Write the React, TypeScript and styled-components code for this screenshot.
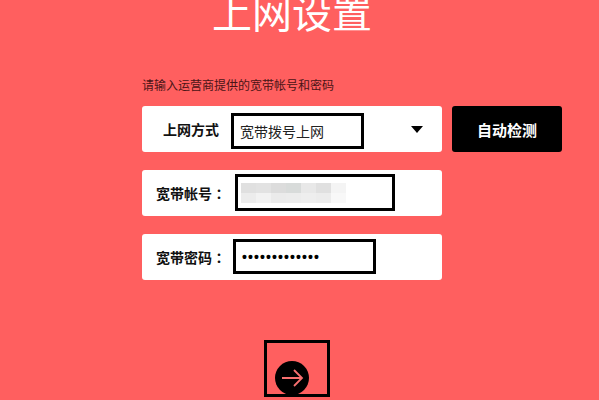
import { createGlobalStyle } from "styled-components";
import styled from "styled-components";

const GlobalStyle = createGlobalStyle`
  html, body {
    margin: 0;
    padding: 0;
    height: 100%;
    overflow: hidden;
    background: #ff5f5f;
    font-family: "Liberation Sans", "Noto Sans CJK SC", sans-serif;
  }
`;

const Page = styled.div`
  width: 599px;
  height: 400px;
  background: #ff5f5f;
  display: flex;
  flex-direction: column;
  overflow: hidden;
`;

const Title = styled.h1`
  margin: -11px 0 0 -15px;
  font-size: 40px;
  line-height: 50px;
  font-weight: 400;
  color: #fff;
  text-align: center;
`;

const Form = styled.div`
  display: flex;
  flex-direction: column;
  padding-left: 142px;
`;

const Hint = styled.p`
  margin: 40px 0 13px;
  font-size: 12px;
  line-height: 14px;
  color: #4a1416;
`;

const TopRow = styled.div`
  display: flex;
  gap: 10px;
  margin-bottom: 18px;
`;

const Card = styled.div<{ $gap?: number }>`
  width: 300px;
  height: 46px;
  box-sizing: border-box;
  background: #fff;
  border-radius: 3px;
  display: flex;
  align-items: center;
  flex-shrink: 0;
  margin-bottom: ${(p) => p.$gap ?? 0}px;
`;

const Label = styled.span<{ $left: number; $width: number }>`
  margin-left: ${(p) => p.$left}px;
  width: ${(p) => p.$width}px;
  flex-shrink: 0;
  font-size: 14px;
  font-weight: 700;
  color: #111;
  white-space: nowrap;
`;

const Colon = styled.span`
  font-family: "Noto Sans CJK TC", sans-serif;
`;

const Field = styled.div<{ $width: number; $height: number; $top: number }>`
  box-sizing: border-box;
  width: ${(p) => p.$width}px;
  height: ${(p) => p.$height}px;
  margin-top: ${(p) => p.$top}px;
  border: 3px solid #000;
  padding-left: 6px;
  display: flex;
  align-items: center;
  font-size: 14px;
  color: #222;
`;

const Caret = styled.span`
  margin-left: 47px;
  width: 0;
  height: 0;
  border-left: 6px solid transparent;
  border-right: 6px solid transparent;
  border-top: 7px solid #000;
`;

const DetectButton = styled.button`
  width: 110px;
  height: 46px;
  padding: 0;
  border: 0;
  border-radius: 3px;
  background: #000;
  color: #fff;
  font-family: inherit;
  font-size: 15px;
  font-weight: 700;
`;

const Mosaic = styled.div`
  display: grid;
  grid-template-columns: repeat(7, 15px);
  grid-template-rows: repeat(2, 10px);
  margin-left: -3px;
`;

const Tile = styled.div<{ $color: string }>`
  background: ${(p) => p.$color};
`;

const Dots = styled.span`
  font-size: 14px;
  font-weight: 700;
  letter-spacing: 1.1px;
  color: #000;
`;

const NextWrap = styled.div`
  box-sizing: border-box;
  width: 66px;
  height: 57px;
  margin: 60px 0 0 264px;
  border: 3px solid #000;
  padding: 18px 0 0 8px;
`;

const NextButton = styled.button`
  display: flex;
  align-items: center;
  justify-content: center;
  width: 34px;
  height: 34px;
  padding: 0;
  border: 0;
  border-radius: 50%;
  background: #000;
`;

const tiles = [
  "#e0e0e0", "#e2e2e2", "#dcdcdc", "#d8dbda", "#e8e8e8", "#e0e0e0", "#f4f4f4",
  "#ececec", "#f2f2f2", "#ebebeb", "#ececec", "#eeeeee", "#ececec", "#f8f8f8",
];

export default function App() {
  return (
    <Page>
      <GlobalStyle />
      <Title>上网设置</Title>
      <Form>
        <Hint>请输入运营商提供的宽带帐号和密码</Hint>
        <TopRow>
          <Card>
            <Label $left={21} $width={68}>上网方式</Label>
            <Field $width={133} $height={36} $top={3}>宽带拨号上网</Field>
            <Caret />
          </Card>
          <DetectButton>自动检测</DetectButton>
        </TopRow>
        <Card $gap={18}>
          <Label $left={14} $width={79}>宽带帐号<Colon>：</Colon></Label>
          <Field $width={160} $height={37} $top={-1}>
            <Mosaic>
              {tiles.map((color, i) => (
                <Tile key={i} $color={color} />
              ))}
            </Mosaic>
          </Field>
        </Card>
        <Card>
          <Label $left={14} $width={77}>宽带密码<Colon>：</Colon></Label>
          <Field $width={143} $height={35} $top={-1}>
            <Dots>•••••••••••••</Dots>
          </Field>
        </Card>
      </Form>
      <NextWrap>
        <NextButton aria-label="下一步">
          <svg width="24" height="20" viewBox="0 0 24 20" fill="none" stroke="#f87070" strokeWidth="1.8">
            <path d="M2 10h20M14 2l8 8-8 8" />
          </svg>
        </NextButton>
      </NextWrap>
    </Page>
  );
}
